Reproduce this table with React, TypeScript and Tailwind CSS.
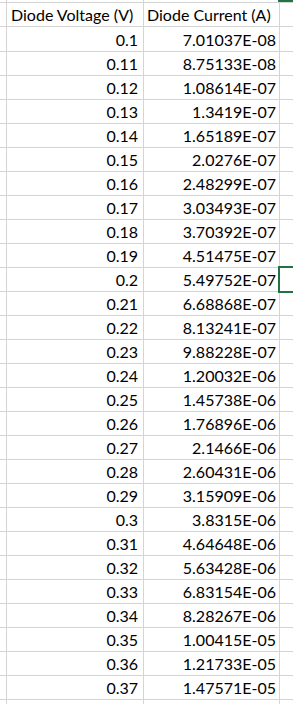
import React from "react";

const data: [string, string][] = [
  ["0.1", "7.01037E-08"],
  ["0.11", "8.75133E-08"],
  ["0.12", "1.08614E-07"],
  ["0.13", "1.3419E-07"],
  ["0.14", "1.65189E-07"],
  ["0.15", "2.0276E-07"],
  ["0.16", "2.48299E-07"],
  ["0.17", "3.03493E-07"],
  ["0.18", "3.70392E-07"],
  ["0.19", "4.51475E-07"],
  ["0.2", "5.49752E-07"],
  ["0.21", "6.68868E-07"],
  ["0.22", "8.13241E-07"],
  ["0.23", "9.88228E-07"],
  ["0.24", "1.20032E-06"],
  ["0.25", "1.45738E-06"],
  ["0.26", "1.76896E-06"],
  ["0.27", "2.1466E-06"],
  ["0.28", "2.60431E-06"],
  ["0.29", "3.15909E-06"],
  ["0.3", "3.8315E-06"],
  ["0.31", "4.64648E-06"],
  ["0.32", "5.63428E-06"],
  ["0.33", "6.83154E-06"],
  ["0.34", "8.28267E-06"],
  ["0.35", "1.00415E-05"],
  ["0.36", "1.21733E-05"],
  ["0.37", "1.47571E-05"],
];

function Row({
  a,
  b,
  h,
  header,
}: {
  a: string;
  b: string;
  h: string;
  header?: boolean;
}) {
  return (
    <div className={`flex border-b border-[#d4d4d4] ${h}`}>
      <div className="w-[7px] shrink-0 border-r border-[#d4d4d4]" />
      <div
        className={`w-[137px] shrink-0 border-r border-[#d4d4d4] flex items-end pb-[3px] ${
          header ? "justify-start pl-[4px]" : "justify-end pr-[5px]"
        }`}
      >
        <span className="leading-none whitespace-nowrap">{a}</span>
      </div>
      <div
        className={`w-[136px] shrink-0 border-r border-[#d4d4d4] flex items-end pb-[3px] ${
          header ? "justify-start pl-[3px]" : "justify-end pr-[3px]"
        }`}
      >
        <span className="leading-none whitespace-nowrap">{b}</span>
      </div>
      <div className="flex-1" />
    </div>
  );
}

export default function App() {
  return (
    <div
      className="relative w-[293px] h-[704px] overflow-hidden bg-white text-[16px] text-black"
      style={{ fontFamily: "Lato, 'Open Sans', sans-serif" }}
    >
      <div className="flex border-b border-[#d4d4d4] h-[3px]">
        <div className="w-[7px] shrink-0 border-r border-[#d4d4d4]" />
        <div className="w-[137px] shrink-0 border-r border-[#d4d4d4]" />
        <div className="w-[136px] shrink-0 border-r border-[#d4d4d4]" />
        <div className="flex-1" />
      </div>
      <Row a="Diode Voltage (V)" b="Diode Current (A)" h="h-[24px]" header />
      {data.map(([a, b], i) => (
        <Row key={a} a={a} b={b} h={i === 0 ? "h-[25px]" : "h-[24px]"} />
      ))}
      <div className="flex h-[8px]">
        <div className="w-[7px] shrink-0 border-r border-[#d4d4d4]" />
        <div className="w-[137px] shrink-0 border-r border-[#d4d4d4]" />
        <div className="w-[136px] shrink-0 border-r border-[#d4d4d4]" />
        <div className="flex-1" />
      </div>
      <div className="absolute left-[278px] top-0 right-0 h-[2px] bg-[#217346]" />
      <div className="absolute left-[278px] top-[266px] w-[30px] h-[27px] border-2 border-[#217346]" />
    </div>
  );
}
